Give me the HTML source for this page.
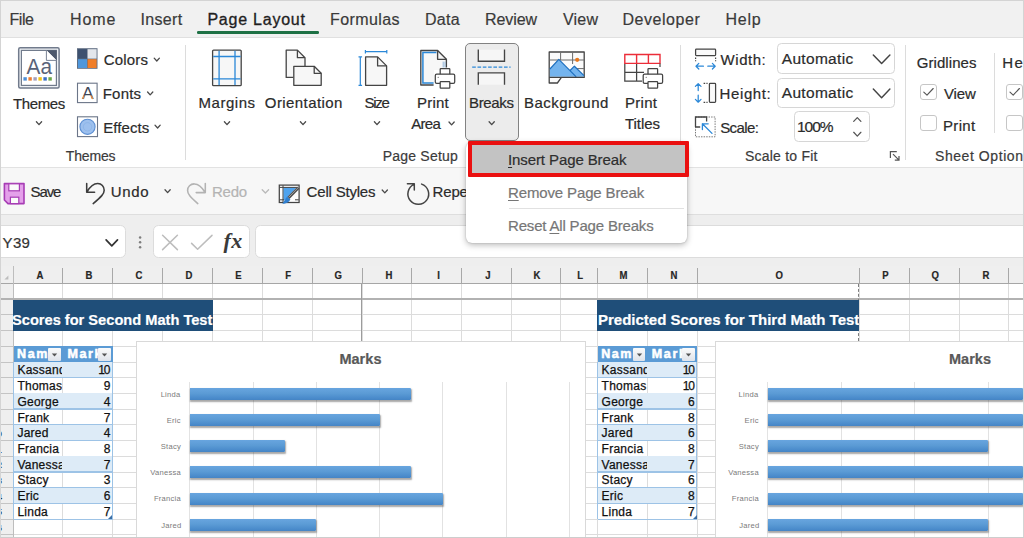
<!DOCTYPE html>
<html lang="en"><head><meta charset="utf-8"><title>Excel - Insert Page Break</title>
<style>
html,body{margin:0;padding:0;background:#fff;}
body{width:1024px;height:538px;overflow:hidden;font-family:"Liberation Sans",sans-serif;}
#app{position:relative;width:1024px;height:538px;overflow:hidden;background:#fff;}
#app div,#app span,#app svg{position:absolute;}
.t{white-space:pre;line-height:20px;-webkit-text-stroke:0.2px;}
.clip{overflow:hidden;}
#frame{left:0;top:0;width:1022px;height:535.5px;border:1px solid #d4d4d4;border-bottom:1.5px solid #cdcdcd;z-index:50;pointer-events:none;}
#tabbar{left:0;top:0;width:1024px;height:37px;background:#f1f1f1;border-bottom:1px solid #e0e0e0;}
#tabsel{left:196.5px;top:31px;width:122px;height:2.6px;background:#1e7145;border-radius:1.3px;}
#ribbon{left:0;top:38px;width:1024px;height:129px;background:#fff;}
#ribline{left:0;top:167px;width:1024px;height:1px;background:#e2e2e2;}
#qat{left:0;top:168px;width:1024px;height:45.5px;background:#f7f7f7;}
#qatline{left:0;top:213.5px;width:1024px;height:1px;background:#dedede;}
#fbar{left:0;top:214.5px;width:1024px;height:51px;background:#eeeeee;}
.fbox{background:#fff;border-radius:5.5px;top:225.3px;height:31.2px;border:1px solid #dcdcdc;box-sizing:content-box;margin-left:-1px;}
.vsep{width:1px;background:#dcdcdc;}
.dd{border:1.2px solid #d6d6d6;border-radius:4.5px;background:#fff;box-sizing:border-box;}
.cb{border:1px solid #c6c6c6;border-radius:3px;background:#fff;box-sizing:border-box;width:16.4px;height:16px;}
#breaksbtn{left:465px;top:43.2px;width:54px;height:98px;box-sizing:border-box;border:1.4px solid #828282;border-radius:5px;background:#ececec;}
#menu{left:466px;top:141.6px;width:220.5px;height:101.4px;background:#fff;border-radius:6px;box-shadow:0 2px 6px rgba(0,0,0,.28),0 0 1.5px rgba(0,0,0,.25);z-index:20;}
#menuhl{left:468px;top:141.3px;width:221.3px;height:35.3px;box-sizing:border-box;border:4.2px solid #ea1010;background:#c3c3c3;z-index:21;border-radius:1px;}
#menusep{left:509px;top:208.3px;width:175px;height:1px;background:#e1e1e1;z-index:22;}
#menutexts{left:0;top:0;z-index:23;}
u{text-decoration:underline;text-underline-offset:2px;text-decoration-thickness:1px;}
/* sheet */
#colhdr{left:0;top:265.5px;width:1024px;height:17.5px;background:#efefef;}
#colhdrline{left:0;top:282.6px;width:1024px;height:1.2px;background:#a6a6a6;}
#rowhdr{left:0;top:284px;width:13px;height:254px;background:#efefef;}
#rowhdrline{left:13px;top:265.5px;width:1px;height:273px;background:#bdbdbd;}
.cs{top:268px;width:1px;height:15px;background:#a8a8a8;}
.gv{width:1px;background:#dcdcdc;top:284px;height:254px;}
.gh{height:1px;background:#dcdcdc;left:0;width:1024px;}
.chart{background:#fff;border:1px solid #d9d9d9;box-sizing:border-box;}
.bar{height:12px;border-radius:0 1px 1px 0;background:linear-gradient(#68a5df 0%,#5b9bd5 45%,#4a8bcb 85%,#4584c4 100%);box-shadow:0.5px 1.6px 1.6px rgba(60,60,60,.45);}
.cg{width:1px;background:#e2e2e2;}

</style></head>
<body>
<div id="app">
<div id="tabbar"></div><div id="tabsel"></div>
<div id="ribbon"></div><div id="ribline"></div>
<div id="qat"></div><div id="qatline"></div>
<div id="fbar"></div>
<div class="fbox" style="left:-6px;width:131px"></div>
<div class="fbox" style="left:153.8px;width:95px"></div>
<div class="fbox" style="left:255.9px;width:800px"></div>
<!-- ribbon separators -->
<div class="vsep" style="left:185px;top:45px;height:115px"></div>
<div class="vsep" style="left:680px;top:45px;height:120px"></div>
<div class="vsep" style="left:905px;top:45px;height:115px"></div>
<div class="vsep" style="left:994px;top:53px;height:80px"></div>
<div id="breaksbtn"></div>
<!-- dropdowns -->
<div class="dd" style="left:777.2px;top:43.1px;width:117.4px;height:30.8px"></div>
<div class="dd" style="left:777.2px;top:77.6px;width:117.4px;height:30.6px"></div>
<div class="dd" style="left:793.6px;top:111.3px;width:76.4px;height:30.4px"></div>
<div class="cb" style="left:920.2px;top:83.8px"></div>
<div class="cb" style="left:920.2px;top:115.3px"></div>
<div class="cb" style="left:1006.4px;top:83.8px"></div>
<div class="cb" style="left:1006.4px;top:115.3px"></div>
<svg id="icons" style="left:0;top:0" width="1024" height="538" viewBox="0 0 1024 538">
<g>
<rect x="18.7" y="47.7" width="40.4" height="40.4" rx="1.5" fill="#eef1f5" stroke="#717b8c" stroke-width="1.5"/>
<rect x="21.4" y="50.4" width="35" height="35" fill="#fff" stroke="#717b8c" stroke-width="1.2"/>
<path d="M46.4 50.2L56.6 50.2L56.6 60.4Z" fill="#4d586c"/>
<path d="M46.4 50.2V60.4H56.6" fill="#fff" stroke="#6b7588" stroke-width="0.9"/>
<rect x="23.4" y="77.2" width="3.4" height="3.4" fill="#4f8fd6"/><rect x="28.4" y="77.2" width="3.4" height="3.4" fill="#ee7d31"/><rect x="33.4" y="77.2" width="3.4" height="3.4" fill="#a5a0bb"/><rect x="38.4" y="77.2" width="3.4" height="3.4" fill="#f2c314"/><rect x="43.4" y="77.2" width="3.4" height="3.4" fill="#3b6fc4"/><rect x="48.4" y="77.2" width="3.4" height="3.4" fill="#6aa84a"/>
</g>
<text x="26.6" y="73.8" font-family="Liberation Sans, sans-serif" font-size="22.5" fill="#596379" textLength="25.4" lengthAdjust="spacingAndGlyphs">Aa</text>
<g><rect x="77" y="48.2" width="20.5" height="20.6" fill="#5f6d82"/>
<rect x="78" y="49.2" width="9" height="9.4" fill="#3d5170"/><rect x="87.6" y="49.2" width="9" height="9.4" fill="#e3e6eb"/>
<rect x="78" y="59.2" width="9" height="8.8" fill="#4f97dc"/><rect x="87.6" y="59.2" width="9" height="8.8" fill="#f07e29"/></g>
<path d="M154.20 58.15L156.80 61.05L159.40 58.15" fill="none" stroke="#4a4a4a" stroke-width="1.3" stroke-linecap="round" stroke-linejoin="round"/>
<rect x="77.5" y="83.2" width="19.6" height="19.4" fill="#fff" stroke="#6b7588" stroke-width="1.1"/>
<text x="82" y="99.4" font-family="Liberation Sans, sans-serif" font-size="16" fill="#3f4656" textLength="11.6" lengthAdjust="spacingAndGlyphs">A</text>
<path d="M82.8 99l1.4-3.6M92.8 99l-1.4-3.6" stroke="#e08a4a" stroke-width="1.3" fill="none"/>
<path d="M147.60 91.95L150.20 94.85L152.80 91.95" fill="none" stroke="#4a4a4a" stroke-width="1.3" stroke-linecap="round" stroke-linejoin="round"/>
<rect x="77.5" y="116.8" width="20" height="19.8" fill="#fff" stroke="#6b7588" stroke-width="1.1"/>
<circle cx="87.5" cy="126.8" r="7.6" fill="#9dc0ee" stroke="#5d8fd2" stroke-width="1.1"/>
<circle cx="87.5" cy="126.8" r="4.2" fill="none" stroke="#8ab2e6" stroke-width="0.8"/>
<path d="M155.00 125.15L157.60 128.05L160.20 125.15" fill="none" stroke="#4a4a4a" stroke-width="1.3" stroke-linecap="round" stroke-linejoin="round"/>
<path d="M36.40 121.75L39.00 124.65L41.60 121.75" fill="none" stroke="#4a4a4a" stroke-width="1.3" stroke-linecap="round" stroke-linejoin="round"/>
<path d="M224.40 121.75L227.00 124.65L229.60 121.75" fill="none" stroke="#4a4a4a" stroke-width="1.3" stroke-linecap="round" stroke-linejoin="round"/>
<path d="M300.40 121.75L303.00 124.65L305.60 121.75" fill="none" stroke="#4a4a4a" stroke-width="1.3" stroke-linecap="round" stroke-linejoin="round"/>
<path d="M374.40 121.75L377.00 124.65L379.60 121.75" fill="none" stroke="#4a4a4a" stroke-width="1.3" stroke-linecap="round" stroke-linejoin="round"/>
<path d="M449.00 121.95L451.60 124.85L454.20 121.95" fill="none" stroke="#4a4a4a" stroke-width="1.3" stroke-linecap="round" stroke-linejoin="round"/>
<path d="M489.10 121.75L491.70 124.65L494.30 121.75" fill="none" stroke="#4a4a4a" stroke-width="1.3" stroke-linecap="round" stroke-linejoin="round"/>
<g fill="none"><rect x="212.6" y="50.1" width="28.6" height="35.6" rx="1" fill="#f7f7f7" stroke="#444" stroke-width="1.3"/>
<path d="M219.1 50.8V85M235 50.8V85M213.2 56.5H240.6M213.2 78.9H240.6" stroke="#2b88d8" stroke-width="1.3"/></g>
<g fill="#f7f7f7" stroke="#444" stroke-width="1.3" stroke-linejoin="round">
<path d="M293.4 77.4H286.2V50.1H297.4L305 57.7V66" fill="#f7f7f7"/>
<path d="M297.4 50.1V57.7H305" fill="none"/>
<path d="M293.8 66.3H314.2L321.2 73.3V85.3H293.8Z"/>
<path d="M314.2 66.3V73.3H321.2" fill="none"/></g>
<g fill="#f7f7f7" stroke="#444" stroke-width="1.3" stroke-linejoin="round">
<path d="M365.6 56.9H377.6L386.6 65.9V85.3H365.6Z"/><path d="M377.6 56.9V65.9H386.6" fill="none"/></g>
<path d="M365.2 51.7H387M365.4 49.9V53.5M386.8 49.9V53.5M360.3 56.6V85.6M358.5 56.8H362.1M358.5 85.4H362.1" stroke="#2b88d8" stroke-width="1.2" fill="none"/>
<path d="M420.8 50.5H437.6L446.4 59.3V70H434V85H420.8Z" fill="#f7f7f7"/>
<g fill="none" stroke="#444" stroke-width="1.35" stroke-linejoin="round">
<path d="M433.6 85H420.8V50.5H437.6L446.4 59.3V67.6"/><path d="M437.6 50.5V59.3H446.4"/></g>
<path d="M436.4 52.5H422.9V83.1H433.6" stroke="#2b88d8" stroke-width="1.5" fill="none"/>
<path d="M443.2 61.6V67.4M445 61.6V67.4" stroke="#7aa8d6" stroke-width="0.8" fill="none"/>
<g fill="#fff" stroke="#444" stroke-width="1.25" stroke-linejoin="round">
<rect x="440.2" y="68.6" width="9.6" height="6.6" rx="0.6"/>
<rect x="435.3" y="74.2" width="19.4" height="9.2" rx="1.4"/>
<rect x="440.2" y="81.6" width="9.6" height="6.4" rx="0.6"/>
<circle cx="438.2" cy="77.2" r="0.55" fill="#444" stroke="none"/></g>
<g fill="#f6f6f6" stroke="#444" stroke-width="1.35" stroke-linejoin="miter">
<path d="M478.3 49.6V61.2H504.5V49.6" /><path d="M478.3 84.8V72.8H504.5V84.8"/></g>
<path d="M472.2 67.2H510.6" stroke="#2b88d8" stroke-width="1.3" stroke-dasharray="3.6 1.7" fill="none"/>
<g>
<path d="M549.2 52H584.2V77.4H561.4L557.4 83H549.2Z" fill="#fbfbfb" stroke="#444" stroke-width="1.3" stroke-linejoin="round"/>
<path d="M560.6 52.4V60M572.6 52.4V64M549.6 60H584M573 68.6H584" stroke="#6a6a6a" stroke-width="1" fill="none"/>
<path d="M549.9 76.8V69L558.8 59.4L576.2 76.8Z" fill="#74b4ee"/>
<path d="M569.6 71L574.4 66.2L584 75.4V76.8H575.4Z" fill="#74b4ee"/>
<path d="M549.9 69L558.8 59.4L576.2 76.8M569.6 71L574.4 66.2L584 75.6" fill="none" stroke="#1d6fbf" stroke-width="1.2" stroke-linejoin="round"/>
<circle cx="577.2" cy="59.8" r="2.1" fill="#e8781e"/>
<path d="M549.2 77.4H584.2" stroke="#444" stroke-width="1.2"/>
</g>
<g fill="none">
<path d="M624.8 63.6V81.2H642M636.6 63.6V81.2M624.8 72.3H644" stroke="#444" stroke-width="1.25"/>
<path d="M624.8 54.5H660V63.4H624.8ZM636.6 54.5V63.4M648.4 54.5V63.4" stroke="#ec2d39" stroke-width="1.4"/>
<path d="M660 63.4V67" stroke="#444" stroke-width="1.2"/></g>
<g fill="#fff" stroke="#444" stroke-width="1.25" stroke-linejoin="round">
<rect x="648" y="68.6" width="9.6" height="6.6" rx="0.6"/>
<rect x="643.2" y="74.2" width="19.4" height="9.2" rx="1.4"/>
<rect x="648" y="81.6" width="9.6" height="6.4" rx="0.6"/>
<circle cx="646.2" cy="77.2" r="0.55" fill="#444" stroke="none"/></g>
<g fill="none"><rect x="695.6" y="49.2" width="20" height="6.4" rx="0.8" fill="#fafafa" stroke="#444" stroke-width="1.25"/>
<path d="M695.6 57.4V61.2M715.6 57.4V61.2" stroke="#444" stroke-width="1.2" stroke-dasharray="1.6 1.2"/>
<path d="M696 66.2H703.4M707.8 66.2H715.2M698.8 63.4L696 66.2L698.8 69M712.4 63.4L715.2 66.2L712.4 69" stroke="#2b88d8" stroke-width="1.25" stroke-linecap="round" stroke-linejoin="round"/></g>
<g fill="none"><rect x="709.4" y="83.4" width="6.2" height="19" rx="0.8" fill="#fafafa" stroke="#444" stroke-width="1.25"/>
<path d="M703.6 83.4H707.6M703.6 102.4H707.6" stroke="#444" stroke-width="1.2" stroke-dasharray="1.6 1.2"/>
<path d="M698.2 83.6V90.6M698.2 95.2V102.2M695.4 86.4L698.2 83.6L701 86.4M695.4 99.4L698.2 102.2L701 99.4" stroke="#2b88d8" stroke-width="1.25" stroke-linecap="round" stroke-linejoin="round"/></g>
<g fill="none"><rect x="695.5" y="117" width="19.6" height="19.8" stroke="#7a7a7a" stroke-width="1" stroke-dasharray="1.5 1.1"/>
<path d="M695.5 127V117H706.6V121.4M695.5 127H700.2" stroke="#444" stroke-width="1.3"/>
<path d="M712 133.4L702.4 123.8M702.4 129.6V123.8H708.2" stroke="#2b88d8" stroke-width="1.3" stroke-linecap="round" stroke-linejoin="round"/></g>
<path d="M873.30 54.90L881.60 63.50L889.90 54.90" fill="none" stroke="#444" stroke-width="1.45" stroke-linecap="round" stroke-linejoin="round"/>
<path d="M873.30 89.10L881.60 97.70L889.90 89.10" fill="none" stroke="#444" stroke-width="1.45" stroke-linecap="round" stroke-linejoin="round"/>
<path d="M853.70 121.40L857.30 117.60L860.90 121.40" fill="none" stroke="#555" stroke-width="1.25" stroke-linecap="round" stroke-linejoin="round"/>
<path d="M853.70 132.30L857.30 136.10L860.90 132.30" fill="none" stroke="#555" stroke-width="1.25" stroke-linecap="round" stroke-linejoin="round"/>
<path d="M923.8 92.10000000000001L927.0 95.10000000000001L933.1999999999999 88.5" fill="none" stroke="#555" stroke-width="1.15" stroke-linecap="round" stroke-linejoin="round"/>
<path d="M1010.0 92.10000000000001L1013.2 95.10000000000001L1019.4 88.5" fill="none" stroke="#555" stroke-width="1.15" stroke-linecap="round" stroke-linejoin="round"/>
<path d="M890.4 158V151.6H896.8M893 154.2L899 160.2M899 156V160.2H894.8" fill="none" stroke="#555" stroke-width="1.2" />
<g><path d="M4.4 183.6H24V203.6H8L4.4 200Z" fill="#e4a0ea" stroke="#a73db5" stroke-width="1.6" stroke-linejoin="round"/>
<rect x="8.8" y="183.8" width="10.6" height="7" fill="#fbfbfb" stroke="#a73db5" stroke-width="1.2"/>
<rect x="10.4" y="197.2" width="8.4" height="6.4" fill="#fbfbfb" stroke="#a73db5" stroke-width="1.2"/></g>
<path d="M86.7 183.4V192.2H94.6M87.2 191.6C90 186.8 93.6 183.6 97.6 183.5C101.6 183.4 104.2 186.6 104.2 190.2C104.2 193.8 101.4 196.6 93.2 203.6" fill="none" stroke="#3d3d3d" stroke-width="1.55" stroke-linecap="round" stroke-linejoin="round"/>
<path d="M165.00 189.75L167.60 192.65L170.20 189.75" fill="none" stroke="#4a4a4a" stroke-width="1.3" stroke-linecap="round" stroke-linejoin="round"/>
<path d="M205.3 183.4V192.6H196.2M204.8 192C202 187.2 198.4 184 194.4 183.9C190.4 183.8 187.6 186.8 187.6 190.4C187.6 194 190 196.8 197.8 203.6" fill="none" stroke="#b3b3b3" stroke-width="1.55" stroke-linecap="round" stroke-linejoin="round"/>
<path d="M262.20 189.80L265.40 193.00L268.60 189.80" fill="none" stroke="#b9b9b9" stroke-width="1.3" stroke-linecap="round" stroke-linejoin="round"/>
<g><rect x="279.3" y="185.1" width="19.8" height="17.4" fill="#fdfdfd" stroke="#444" stroke-width="1.25"/>
<path d="M283.4 187.6H296.6L284.6 200.2H283.4Z" fill="#4fa3ee"/>
<path d="M283 185.4V202.2M279.6 187.4H298.8M279.6 199.8H284M295 199.8H298.8" stroke="#444" stroke-width="1" fill="none"/>
<path d="M298.4 187.8L288.4 198" stroke="#505050" stroke-width="3" stroke-linecap="butt"/>
<path d="M298.6 187.2L288.6 197.4" stroke="#b5b5b5" stroke-width="0.8"/>
<path d="M287.2 196.4L290.4 199.6C288.8 203 285.2 204.2 282.2 203.4C284 202 284.8 199.2 287.2 196.4Z" fill="#2f7fd0"/></g>
<path d="M382.20 189.95L384.80 192.85L387.40 189.95" fill="none" stroke="#4a4a4a" stroke-width="1.3" stroke-linecap="round" stroke-linejoin="round"/>
<path d="M414.2 184.4A10.4 10.4 0 1 0 421.6 184.1M407.4 183.7H414.3V190" fill="none" stroke="#444" stroke-width="1.5" stroke-linecap="round" stroke-linejoin="round"/>
<path d="M106.10 239.80L111.80 245.80L117.50 239.80" fill="none" stroke="#333" stroke-width="1.7" stroke-linecap="round" stroke-linejoin="round"/>
<circle cx="140.1" cy="237.4" r="1.25" fill="#7d7d7d"/>
<circle cx="140.1" cy="242.3" r="1.25" fill="#7d7d7d"/>
<circle cx="140.1" cy="247.2" r="1.25" fill="#7d7d7d"/>
<path d="M162.6 235.2L177.4 249.6M177.4 235.2L162.6 249.6" stroke="#bdbdbd" stroke-width="1.55" fill="none" stroke-linecap="round"/>
<path d="M191.6 243.4L197.6 249.2L212 235.4" stroke="#bdbdbd" stroke-width="1.55" fill="none" stroke-linecap="round" stroke-linejoin="round"/>
</svg>
<div id="colhdr"></div><div id="rowhdr"></div>
<div class="gh" style="top:298.62px"></div>
<div class="gh" style="top:314.34px"></div>
<div class="gh" style="top:330.06px"></div>
<div class="gh" style="top:345.78px"></div>
<div class="gh" style="top:361.50px"></div>
<div class="gh" style="top:377.22px"></div>
<div class="gh" style="top:392.94px"></div>
<div class="gh" style="top:408.66px"></div>
<div class="gh" style="top:424.38px"></div>
<div class="gh" style="top:440.10px"></div>
<div class="gh" style="top:455.82px"></div>
<div class="gh" style="top:471.54px"></div>
<div class="gh" style="top:487.26px"></div>
<div class="gh" style="top:502.98px"></div>
<div class="gh" style="top:518.70px"></div>
<div class="gh" style="top:534.42px"></div>
<div class="gv" style="left:62.30px"></div>
<div class="cs" style="left:62.30px"></div>
<div class="gv" style="left:112.10px"></div>
<div class="cs" style="left:112.10px"></div>
<div class="gv" style="left:161.90px"></div>
<div class="cs" style="left:161.90px"></div>
<div class="gv" style="left:211.90px"></div>
<div class="cs" style="left:211.90px"></div>
<div class="gv" style="left:261.50px"></div>
<div class="cs" style="left:261.50px"></div>
<div class="gv" style="left:311.50px"></div>
<div class="cs" style="left:311.50px"></div>
<div class="gv" style="left:361.50px"></div>
<div class="cs" style="left:361.50px"></div>
<div class="gv" style="left:411.30px"></div>
<div class="cs" style="left:411.30px"></div>
<div class="gv" style="left:461.00px"></div>
<div class="cs" style="left:461.00px"></div>
<div class="gv" style="left:510.50px"></div>
<div class="cs" style="left:510.50px"></div>
<div class="gv" style="left:559.50px"></div>
<div class="cs" style="left:559.50px"></div>
<div class="gv" style="left:596.70px"></div>
<div class="cs" style="left:596.70px"></div>
<div class="gv" style="left:646.70px"></div>
<div class="cs" style="left:646.70px"></div>
<div class="gv" style="left:696.50px"></div>
<div class="cs" style="left:696.50px"></div>
<div class="gv" style="left:858.50px"></div>
<div class="cs" style="left:858.50px"></div>
<div class="gv" style="left:908.70px"></div>
<div class="cs" style="left:908.70px"></div>
<div class="gv" style="left:958.50px"></div>
<div class="cs" style="left:958.50px"></div>
<div class="gv" style="left:1008.20px"></div>
<div class="cs" style="left:1008.20px"></div>
<div class="gv" style="left:1057.50px"></div>
<div class="cs" style="left:1057.50px"></div>
<div class="cs" style="left:12.5px"></div>
<div id="colhdrline"></div><div id="rowhdrline"></div>
<div style="left:0;top:298.62px;width:13px;height:1px;background:#c4c4c4"></div>
<div style="left:0;top:314.34px;width:13px;height:1px;background:#c4c4c4"></div>
<div style="left:0;top:330.06px;width:13px;height:1px;background:#c4c4c4"></div>
<div style="left:0;top:345.78px;width:13px;height:1px;background:#c4c4c4"></div>
<div style="left:0;top:361.50px;width:13px;height:1px;background:#c4c4c4"></div>
<div style="left:0;top:377.22px;width:13px;height:1px;background:#c4c4c4"></div>
<div style="left:0;top:392.94px;width:13px;height:1px;background:#c4c4c4"></div>
<div style="left:0;top:408.66px;width:13px;height:1px;background:#c4c4c4"></div>
<div style="left:0;top:424.38px;width:13px;height:1px;background:#c4c4c4"></div>
<div style="left:0;top:440.10px;width:13px;height:1px;background:#c4c4c4"></div>
<div style="left:0;top:455.82px;width:13px;height:1px;background:#c4c4c4"></div>
<div style="left:0;top:471.54px;width:13px;height:1px;background:#c4c4c4"></div>
<div style="left:0;top:487.26px;width:13px;height:1px;background:#c4c4c4"></div>
<div style="left:0;top:502.98px;width:13px;height:1px;background:#c4c4c4"></div>
<div style="left:0;top:518.70px;width:13px;height:1px;background:#c4c4c4"></div>
<div style="left:0;top:534.42px;width:13px;height:1px;background:#c4c4c4"></div>
<svg style="left:4.2px;top:274.8px" width="5" height="5" viewBox="0 0 5 5"><path d="M4.4 0.4V4.4H0.4Z" fill="#bdbdbd"/></svg>
<div style="left:0;top:298.42px;width:1024px;height:1.2px;background:#b2b2b2"></div>
<div style="left:361.2px;top:284px;width:1.2px;height:57px;background:#9c9c9c"></div>
<div style="left:858.4px;top:284px;width:0;height:57px;border-left:1.4px dashed #7d7d7d"></div>
<div style="left:13px;top:299.52px;width:199.6px;height:31.24px;background:#1f4e79"></div>
<div style="left:597.4px;top:299.52px;width:261.2px;height:31.24px;background:#1f4e79"></div>
<div style="left:13.6px;top:346.48px;width:99.00px;height:15.52px;background:#5b9bd5"></div>
<div style="left:48.40px;top:348.08px;width:12.6px;height:13.32px;background:linear-gradient(#fbfbfb,#dfe3ea);border-radius:1px"></div>
<svg style="left:51.20px;top:352.68px" width="7" height="4" viewBox="0 0 7 4"><path d="M0.8 0.4H6.2L3.5 3.6Z" fill="#555"/></svg>
<div style="left:98.00px;top:348.08px;width:12.6px;height:13.32px;background:linear-gradient(#fbfbfb,#dfe3ea);border-radius:1px"></div>
<svg style="left:100.80px;top:352.68px" width="7" height="4" viewBox="0 0 7 4"><path d="M0.8 0.4H6.2L3.5 3.6Z" fill="#555"/></svg>
<div style="left:13.6px;top:362.00px;width:99.00px;height:15.72px;background:#ddebf7"></div>
<div style="left:13.6px;top:377.02px;width:99.00px;height:1.2px;background:#9dc3e6"></div>
<div style="left:13.6px;top:392.74px;width:99.00px;height:1.2px;background:#9dc3e6"></div>
<div style="left:13.6px;top:393.44px;width:99.00px;height:15.72px;background:#ddebf7"></div>
<div style="left:13.6px;top:408.46px;width:99.00px;height:1.2px;background:#9dc3e6"></div>
<div style="left:13.6px;top:424.18px;width:99.00px;height:1.2px;background:#9dc3e6"></div>
<div style="left:13.6px;top:424.88px;width:99.00px;height:15.72px;background:#ddebf7"></div>
<div style="left:13.6px;top:439.90px;width:99.00px;height:1.2px;background:#9dc3e6"></div>
<div style="left:13.6px;top:455.62px;width:99.00px;height:1.2px;background:#9dc3e6"></div>
<div style="left:13.6px;top:456.32px;width:99.00px;height:15.72px;background:#ddebf7"></div>
<div style="left:13.6px;top:471.34px;width:99.00px;height:1.2px;background:#9dc3e6"></div>
<div style="left:13.6px;top:487.06px;width:99.00px;height:1.2px;background:#9dc3e6"></div>
<div style="left:13.6px;top:487.76px;width:99.00px;height:15.72px;background:#ddebf7"></div>
<div style="left:13.6px;top:502.78px;width:99.00px;height:1.2px;background:#9dc3e6"></div>
<div style="left:13.6px;top:518.50px;width:99.00px;height:1.2px;background:#9dc3e6"></div>
<div style="left:13.2px;top:362.00px;width:1px;height:157.20px;background:#9dc3e6"></div>
<div style="left:112.00px;top:362.00px;width:1px;height:157.20px;background:#9dc3e6"></div>
<svg style="left:108.40px;top:514.60px" width="4" height="4" viewBox="0 0 4 4"><path d="M4 0V4H0Z" fill="#3a6ea5"/></svg>
<div style="left:597.8000000000001px;top:346.48px;width:99.20px;height:15.52px;background:#5b9bd5"></div>
<div style="left:632.80px;top:348.08px;width:12.6px;height:13.32px;background:linear-gradient(#fbfbfb,#dfe3ea);border-radius:1px"></div>
<svg style="left:635.60px;top:352.68px" width="7" height="4" viewBox="0 0 7 4"><path d="M0.8 0.4H6.2L3.5 3.6Z" fill="#555"/></svg>
<div style="left:682.40px;top:348.08px;width:12.6px;height:13.32px;background:linear-gradient(#fbfbfb,#dfe3ea);border-radius:1px"></div>
<svg style="left:685.20px;top:352.68px" width="7" height="4" viewBox="0 0 7 4"><path d="M0.8 0.4H6.2L3.5 3.6Z" fill="#555"/></svg>
<div style="left:597.8000000000001px;top:362.00px;width:99.20px;height:15.72px;background:#ddebf7"></div>
<div style="left:597.8000000000001px;top:377.02px;width:99.20px;height:1.2px;background:#9dc3e6"></div>
<div style="left:597.8000000000001px;top:392.74px;width:99.20px;height:1.2px;background:#9dc3e6"></div>
<div style="left:597.8000000000001px;top:393.44px;width:99.20px;height:15.72px;background:#ddebf7"></div>
<div style="left:597.8000000000001px;top:408.46px;width:99.20px;height:1.2px;background:#9dc3e6"></div>
<div style="left:597.8000000000001px;top:424.18px;width:99.20px;height:1.2px;background:#9dc3e6"></div>
<div style="left:597.8000000000001px;top:424.88px;width:99.20px;height:15.72px;background:#ddebf7"></div>
<div style="left:597.8000000000001px;top:439.90px;width:99.20px;height:1.2px;background:#9dc3e6"></div>
<div style="left:597.8000000000001px;top:455.62px;width:99.20px;height:1.2px;background:#9dc3e6"></div>
<div style="left:597.8000000000001px;top:456.32px;width:99.20px;height:15.72px;background:#ddebf7"></div>
<div style="left:597.8000000000001px;top:471.34px;width:99.20px;height:1.2px;background:#9dc3e6"></div>
<div style="left:597.8000000000001px;top:487.06px;width:99.20px;height:1.2px;background:#9dc3e6"></div>
<div style="left:597.8000000000001px;top:487.76px;width:99.20px;height:15.72px;background:#ddebf7"></div>
<div style="left:597.8000000000001px;top:502.78px;width:99.20px;height:1.2px;background:#9dc3e6"></div>
<div style="left:597.8000000000001px;top:518.50px;width:99.20px;height:1.2px;background:#9dc3e6"></div>
<div style="left:597.4000000000001px;top:362.00px;width:1px;height:157.20px;background:#9dc3e6"></div>
<div style="left:696.40px;top:362.00px;width:1px;height:157.20px;background:#9dc3e6"></div>
<svg style="left:692.80px;top:514.60px" width="4" height="4" viewBox="0 0 4 4"><path d="M4 0V4H0Z" fill="#3a6ea5"/></svg>
<div class="chart" style="left:136.3px;top:340.5px;width:449.49999999999994px;height:210px"></div>
<div class="cg" style="left:252.50px;top:381.5px;height:160px"></div>
<div class="cg" style="left:315.70px;top:381.5px;height:160px"></div>
<div class="cg" style="left:378.90px;top:381.5px;height:160px"></div>
<div class="cg" style="left:442.10px;top:381.5px;height:160px"></div>
<div class="cg" style="left:505.50px;top:381.5px;height:160px"></div>
<div class="cg" style="left:568.70px;top:381.5px;height:160px"></div>
<div class="cg" style="left:189.00px;top:381.5px;height:160px;background:#e3e3e3"></div>
<div class="bar" style="left:189.8px;top:387.70px;width:221.34px"></div>
<div class="bar" style="left:189.8px;top:413.90px;width:189.72px"></div>
<div class="bar" style="left:189.8px;top:440.10px;width:94.86px"></div>
<div class="bar" style="left:189.8px;top:466.30px;width:221.34px"></div>
<div class="bar" style="left:189.8px;top:492.50px;width:252.96px"></div>
<div class="bar" style="left:189.8px;top:518.70px;width:126.48px"></div>
<div class="chart" style="left:714.8px;top:340.5px;width:325.20000000000005px;height:210px"></div>
<div class="cg" style="left:840.50px;top:381.5px;height:160px"></div>
<div class="cg" style="left:914.00px;top:381.5px;height:160px"></div>
<div class="cg" style="left:987.70px;top:381.5px;height:160px"></div>
<div class="cg" style="left:766.90px;top:381.5px;height:160px;background:#e3e3e3"></div>
<div class="bar" style="left:767.7px;top:387.70px;width:255.50px"></div>
<div class="bar" style="left:767.7px;top:413.90px;width:255.50px"></div>
<div class="bar" style="left:767.7px;top:440.10px;width:220.50px"></div>
<div class="bar" style="left:767.7px;top:466.30px;width:255.50px"></div>
<div class="bar" style="left:767.7px;top:492.50px;width:255.50px"></div>
<div class="bar" style="left:767.7px;top:518.70px;width:220.50px"></div>
<span class="t" style="left:35.57px;top:264.80px;font-size:10.6px;color:#262626;font-weight:700;transform:scaleX(0.9);">A</span>
<span class="t" style="left:85.37px;top:264.80px;font-size:10.6px;color:#262626;font-weight:700;transform:scaleX(0.9);">B</span>
<span class="t" style="left:135.17px;top:264.80px;font-size:10.6px;color:#262626;font-weight:700;transform:scaleX(0.9);">C</span>
<span class="t" style="left:185.07px;top:264.80px;font-size:10.6px;color:#262626;font-weight:700;transform:scaleX(0.9);">D</span>
<span class="t" style="left:235.16px;top:264.80px;font-size:10.6px;color:#262626;font-weight:700;transform:scaleX(0.9);">E</span>
<span class="t" style="left:285.26px;top:264.80px;font-size:10.6px;color:#262626;font-weight:700;transform:scaleX(0.9);">F</span>
<span class="t" style="left:334.38px;top:264.80px;font-size:10.6px;color:#262626;font-weight:700;transform:scaleX(0.9);">G</span>
<span class="t" style="left:384.57px;top:264.80px;font-size:10.6px;color:#262626;font-weight:700;transform:scaleX(0.9);">H</span>
<span class="t" style="left:436.67px;top:264.80px;font-size:10.6px;color:#262626;font-weight:700;transform:scaleX(0.9);">I</span>
<span class="t" style="left:484.80px;top:264.80px;font-size:10.6px;color:#262626;font-weight:700;transform:scaleX(0.9);">J</span>
<span class="t" style="left:533.17px;top:264.80px;font-size:10.6px;color:#262626;font-weight:700;transform:scaleX(0.9);">K</span>
<span class="t" style="left:576.86px;top:264.80px;font-size:10.6px;color:#262626;font-weight:700;transform:scaleX(0.9);">L</span>
<span class="t" style="left:619.29px;top:264.80px;font-size:10.6px;color:#262626;font-weight:700;transform:scaleX(0.9);">M</span>
<span class="t" style="left:669.77px;top:264.80px;font-size:10.6px;color:#262626;font-weight:700;transform:scaleX(0.9);">N</span>
<span class="t" style="left:775.38px;top:264.80px;font-size:10.6px;color:#262626;font-weight:700;transform:scaleX(0.9);">O</span>
<span class="t" style="left:882.06px;top:264.80px;font-size:10.6px;color:#262626;font-weight:700;transform:scaleX(0.9);">P</span>
<span class="t" style="left:931.48px;top:264.80px;font-size:10.6px;color:#262626;font-weight:700;transform:scaleX(0.9);">Q</span>
<span class="t" style="left:981.52px;top:264.80px;font-size:10.6px;color:#262626;font-weight:700;transform:scaleX(0.9);">R</span>
<div class="clip" style="left:0px;top:283.4px;width:13px;height:15.720000000000027px"><span class="t" style="left:-6.07px;top:-1.00px;font-size:9.6px;color:#262626;font-weight:700;">1</span></div>
<div class="clip" style="left:0px;top:299.12px;width:13px;height:15.71999999999997px"><span class="t" style="left:-6.07px;top:-1.00px;font-size:9.6px;color:#262626;font-weight:700;">2</span></div>
<div class="clip" style="left:0px;top:314.84px;width:13px;height:15.720000000000027px"><span class="t" style="left:-6.07px;top:-1.00px;font-size:9.6px;color:#262626;font-weight:700;">3</span></div>
<div class="clip" style="left:0px;top:330.56px;width:13px;height:15.71999999999997px"><span class="t" style="left:-6.07px;top:-1.00px;font-size:9.6px;color:#262626;font-weight:700;">4</span></div>
<div class="clip" style="left:0px;top:346.28px;width:13px;height:15.720000000000027px"><span class="t" style="left:-6.07px;top:-1.00px;font-size:9.6px;color:#262626;font-weight:700;">5</span></div>
<div class="clip" style="left:0px;top:362.0px;width:13px;height:15.71999999999997px"><span class="t" style="left:-6.07px;top:-1.00px;font-size:9.6px;color:#262626;font-weight:700;">6</span></div>
<div class="clip" style="left:0px;top:377.71999999999997px;width:13px;height:15.720000000000027px"><span class="t" style="left:-6.07px;top:-1.00px;font-size:9.6px;color:#262626;font-weight:700;">7</span></div>
<div class="clip" style="left:0px;top:393.44px;width:13px;height:15.71999999999997px"><span class="t" style="left:-6.07px;top:-1.00px;font-size:9.6px;color:#262626;font-weight:700;">8</span></div>
<div class="clip" style="left:0px;top:409.15999999999997px;width:13px;height:15.720000000000027px"><span class="t" style="left:-6.07px;top:-1.00px;font-size:9.6px;color:#262626;font-weight:700;">9</span></div>
<div class="clip" style="left:0px;top:424.88px;width:13px;height:15.720000000000027px"><span class="t" style="left:-8.74px;top:-1.00px;font-size:9.6px;color:#262626;font-weight:700;">10</span></div>
<div class="clip" style="left:0px;top:440.6px;width:13px;height:15.71999999999997px"><span class="t" style="left:-8.48px;top:-1.00px;font-size:9.6px;color:#262626;font-weight:700;">11</span></div>
<div class="clip" style="left:0px;top:456.32px;width:13px;height:15.71999999999997px"><span class="t" style="left:-8.74px;top:-1.00px;font-size:9.6px;color:#262626;font-weight:700;">12</span></div>
<div class="clip" style="left:0px;top:472.03999999999996px;width:13px;height:15.720000000000027px"><span class="t" style="left:-8.74px;top:-1.00px;font-size:9.6px;color:#262626;font-weight:700;">13</span></div>
<div class="clip" style="left:0px;top:487.76px;width:13px;height:15.720000000000027px"><span class="t" style="left:-8.74px;top:-1.00px;font-size:9.6px;color:#262626;font-weight:700;">14</span></div>
<div class="clip" style="left:0px;top:503.48px;width:13px;height:15.720000000000027px"><span class="t" style="left:-8.74px;top:-1.00px;font-size:9.6px;color:#262626;font-weight:700;">15</span></div>
<div class="clip" style="left:0px;top:519.2px;width:13px;height:15.719999999999914px"><span class="t" style="left:-8.74px;top:-1.00px;font-size:9.6px;color:#262626;font-weight:700;">16</span></div>
<div class="clip" style="left:0px;top:534.92px;width:13px;height:15.720000000000027px"><span class="t" style="left:-8.74px;top:-1.00px;font-size:9.6px;color:#262626;font-weight:700;">17</span></div>
<div class="clip" style="left:13px;top:299.12px;width:199.6px;height:32.44px"><span class="t" style="left:-0.80px;top:11.28px;font-size:15.5px;color:#fff;font-weight:700;transform:scaleX(0.9431);transform-origin:0 0;">Scores for Second Math Test</span></div>
<div class="clip" style="left:597.4px;top:299.12px;width:261.4px;height:32.44px"><span class="t" style="left:0.23px;top:11.28px;font-size:15.5px;color:#fff;font-weight:700;transform:scaleX(0.9673);transform-origin:0 0;">Predicted Scores for Third Math Test</span></div>
<div class="clip" style="left:13px;top:346.47999999999996px;width:35.4px;height:15.520000000000039px"><span class="t" style="left:4.10px;top:-2.68px;font-size:12.5px;color:#fff;font-weight:700;letter-spacing:1.535px;-webkit-text-stroke:0.55px #fff;">Name</span></div>
<div class="clip" style="left:62.8px;top:346.47999999999996px;width:35.2px;height:15.520000000000039px"><span class="t" style="left:4.60px;top:-2.68px;font-size:12.5px;color:#fff;font-weight:700;letter-spacing:1.655px;-webkit-text-stroke:0.55px #fff;">Marks</span></div>
<div class="clip" style="left:13px;top:362.0px;width:49.4px;height:15.71999999999997px"><span class="t" style="left:4.40px;top:-1.58px;font-size:12px;color:#111;-webkit-text-stroke:0.25px #111;letter-spacing:0.25px;">Kassandra</span></div>
<span class="t" style="left:98.23px;top:360.42px;font-size:12px;color:#111;-webkit-text-stroke:0.25px #111;letter-spacing:-1.1px;">10</span>
<div class="clip" style="left:13px;top:377.71999999999997px;width:49.4px;height:15.720000000000027px"><span class="t" style="left:4.40px;top:-1.58px;font-size:12px;color:#111;-webkit-text-stroke:0.25px #111;letter-spacing:0.25px;">Thomas</span></div>
<span class="t" style="left:103.70px;top:376.14px;font-size:12px;color:#111;-webkit-text-stroke:0.25px #111;letter-spacing:-1.1px;">9</span>
<div class="clip" style="left:13px;top:393.44px;width:49.4px;height:15.71999999999997px"><span class="t" style="left:4.40px;top:-1.58px;font-size:12px;color:#111;-webkit-text-stroke:0.25px #111;letter-spacing:0.25px;">George</span></div>
<span class="t" style="left:103.70px;top:391.86px;font-size:12px;color:#111;-webkit-text-stroke:0.25px #111;letter-spacing:-1.1px;">4</span>
<div class="clip" style="left:13px;top:409.15999999999997px;width:49.4px;height:15.720000000000027px"><span class="t" style="left:4.40px;top:-1.58px;font-size:12px;color:#111;-webkit-text-stroke:0.25px #111;letter-spacing:0.25px;">Frank</span></div>
<span class="t" style="left:103.70px;top:407.58px;font-size:12px;color:#111;-webkit-text-stroke:0.25px #111;letter-spacing:-1.1px;">7</span>
<div class="clip" style="left:13px;top:424.88px;width:49.4px;height:15.720000000000027px"><span class="t" style="left:4.40px;top:-1.58px;font-size:12px;color:#111;-webkit-text-stroke:0.25px #111;letter-spacing:0.25px;">Jared</span></div>
<span class="t" style="left:103.70px;top:423.30px;font-size:12px;color:#111;-webkit-text-stroke:0.25px #111;letter-spacing:-1.1px;">4</span>
<div class="clip" style="left:13px;top:440.6px;width:49.4px;height:15.71999999999997px"><span class="t" style="left:4.40px;top:-1.58px;font-size:12px;color:#111;-webkit-text-stroke:0.25px #111;letter-spacing:0.25px;">Francia</span></div>
<span class="t" style="left:103.70px;top:439.02px;font-size:12px;color:#111;-webkit-text-stroke:0.25px #111;letter-spacing:-1.1px;">8</span>
<div class="clip" style="left:13px;top:456.32px;width:49.4px;height:15.71999999999997px"><span class="t" style="left:4.40px;top:-1.58px;font-size:12px;color:#111;-webkit-text-stroke:0.25px #111;letter-spacing:0.25px;">Vanessa</span></div>
<span class="t" style="left:103.70px;top:454.74px;font-size:12px;color:#111;-webkit-text-stroke:0.25px #111;letter-spacing:-1.1px;">7</span>
<div class="clip" style="left:13px;top:472.03999999999996px;width:49.4px;height:15.720000000000027px"><span class="t" style="left:4.40px;top:-1.58px;font-size:12px;color:#111;-webkit-text-stroke:0.25px #111;letter-spacing:0.25px;">Stacy</span></div>
<span class="t" style="left:103.70px;top:470.46px;font-size:12px;color:#111;-webkit-text-stroke:0.25px #111;letter-spacing:-1.1px;">3</span>
<div class="clip" style="left:13px;top:487.76px;width:49.4px;height:15.720000000000027px"><span class="t" style="left:4.40px;top:-1.58px;font-size:12px;color:#111;-webkit-text-stroke:0.25px #111;letter-spacing:0.25px;">Eric</span></div>
<span class="t" style="left:103.70px;top:486.18px;font-size:12px;color:#111;-webkit-text-stroke:0.25px #111;letter-spacing:-1.1px;">6</span>
<div class="clip" style="left:13px;top:503.48px;width:49.4px;height:15.720000000000027px"><span class="t" style="left:4.40px;top:-1.58px;font-size:12px;color:#111;-webkit-text-stroke:0.25px #111;letter-spacing:0.25px;">Linda</span></div>
<span class="t" style="left:103.70px;top:501.90px;font-size:12px;color:#111;-webkit-text-stroke:0.25px #111;letter-spacing:-1.1px;">7</span>
<div class="clip" style="left:597.2px;top:346.47999999999996px;width:35.60000000000002px;height:15.520000000000039px"><span class="t" style="left:4.10px;top:-2.68px;font-size:12.5px;color:#fff;font-weight:700;letter-spacing:1.535px;-webkit-text-stroke:0.55px #fff;">Name</span></div>
<div class="clip" style="left:647.2px;top:346.47999999999996px;width:35.19999999999993px;height:15.520000000000039px"><span class="t" style="left:4.60px;top:-2.68px;font-size:12.5px;color:#fff;font-weight:700;letter-spacing:1.655px;-webkit-text-stroke:0.55px #fff;">Marks</span></div>
<div class="clip" style="left:597.2px;top:362.0px;width:49.60000000000002px;height:15.71999999999997px"><span class="t" style="left:4.40px;top:-1.58px;font-size:12px;color:#111;-webkit-text-stroke:0.25px #111;letter-spacing:0.25px;">Kassandra</span></div>
<span class="t" style="left:682.63px;top:360.42px;font-size:12px;color:#111;-webkit-text-stroke:0.25px #111;letter-spacing:-1.1px;">10</span>
<div class="clip" style="left:597.2px;top:377.71999999999997px;width:49.60000000000002px;height:15.720000000000027px"><span class="t" style="left:4.40px;top:-1.58px;font-size:12px;color:#111;-webkit-text-stroke:0.25px #111;letter-spacing:0.25px;">Thomas</span></div>
<span class="t" style="left:682.63px;top:376.14px;font-size:12px;color:#111;-webkit-text-stroke:0.25px #111;letter-spacing:-1.1px;">10</span>
<div class="clip" style="left:597.2px;top:393.44px;width:49.60000000000002px;height:15.71999999999997px"><span class="t" style="left:4.40px;top:-1.58px;font-size:12px;color:#111;-webkit-text-stroke:0.25px #111;letter-spacing:0.25px;">George</span></div>
<span class="t" style="left:688.10px;top:391.86px;font-size:12px;color:#111;-webkit-text-stroke:0.25px #111;letter-spacing:-1.1px;">6</span>
<div class="clip" style="left:597.2px;top:409.15999999999997px;width:49.60000000000002px;height:15.720000000000027px"><span class="t" style="left:4.40px;top:-1.58px;font-size:12px;color:#111;-webkit-text-stroke:0.25px #111;letter-spacing:0.25px;">Frank</span></div>
<span class="t" style="left:688.10px;top:407.58px;font-size:12px;color:#111;-webkit-text-stroke:0.25px #111;letter-spacing:-1.1px;">8</span>
<div class="clip" style="left:597.2px;top:424.88px;width:49.60000000000002px;height:15.720000000000027px"><span class="t" style="left:4.40px;top:-1.58px;font-size:12px;color:#111;-webkit-text-stroke:0.25px #111;letter-spacing:0.25px;">Jared</span></div>
<span class="t" style="left:688.10px;top:423.30px;font-size:12px;color:#111;-webkit-text-stroke:0.25px #111;letter-spacing:-1.1px;">6</span>
<div class="clip" style="left:597.2px;top:440.6px;width:49.60000000000002px;height:15.71999999999997px"><span class="t" style="left:4.40px;top:-1.58px;font-size:12px;color:#111;-webkit-text-stroke:0.25px #111;letter-spacing:0.25px;">Francia</span></div>
<span class="t" style="left:688.10px;top:439.02px;font-size:12px;color:#111;-webkit-text-stroke:0.25px #111;letter-spacing:-1.1px;">8</span>
<div class="clip" style="left:597.2px;top:456.32px;width:49.60000000000002px;height:15.71999999999997px"><span class="t" style="left:4.40px;top:-1.58px;font-size:12px;color:#111;-webkit-text-stroke:0.25px #111;letter-spacing:0.25px;">Vanessa</span></div>
<span class="t" style="left:688.10px;top:454.74px;font-size:12px;color:#111;-webkit-text-stroke:0.25px #111;letter-spacing:-1.1px;">7</span>
<div class="clip" style="left:597.2px;top:472.03999999999996px;width:49.60000000000002px;height:15.720000000000027px"><span class="t" style="left:4.40px;top:-1.58px;font-size:12px;color:#111;-webkit-text-stroke:0.25px #111;letter-spacing:0.25px;">Stacy</span></div>
<span class="t" style="left:688.10px;top:470.46px;font-size:12px;color:#111;-webkit-text-stroke:0.25px #111;letter-spacing:-1.1px;">6</span>
<div class="clip" style="left:597.2px;top:487.76px;width:49.60000000000002px;height:15.720000000000027px"><span class="t" style="left:4.40px;top:-1.58px;font-size:12px;color:#111;-webkit-text-stroke:0.25px #111;letter-spacing:0.25px;">Eric</span></div>
<span class="t" style="left:688.10px;top:486.18px;font-size:12px;color:#111;-webkit-text-stroke:0.25px #111;letter-spacing:-1.1px;">8</span>
<div class="clip" style="left:597.2px;top:503.48px;width:49.60000000000002px;height:15.720000000000027px"><span class="t" style="left:4.40px;top:-1.58px;font-size:12px;color:#111;-webkit-text-stroke:0.25px #111;letter-spacing:0.25px;">Linda</span></div>
<span class="t" style="left:688.10px;top:501.90px;font-size:12px;color:#111;-webkit-text-stroke:0.25px #111;letter-spacing:-1.1px;">7</span>
<span class="t" style="left:339.40px;top:348.90px;font-size:14.5px;color:#595959;font-weight:700;letter-spacing:0.038px;">Marks</span>
<span class="t" style="left:160.64px;top:384.60px;font-size:7.6px;color:#7a7a7a;letter-spacing:0.25px;-webkit-text-stroke:0;">Linda</span>
<span class="t" style="left:166.72px;top:410.80px;font-size:7.6px;color:#7a7a7a;letter-spacing:0.25px;-webkit-text-stroke:0;">Eric</span>
<span class="t" style="left:160.81px;top:437.00px;font-size:7.6px;color:#7a7a7a;letter-spacing:0.25px;-webkit-text-stroke:0;">Stacy</span>
<span class="t" style="left:150.24px;top:463.20px;font-size:7.6px;color:#7a7a7a;letter-spacing:0.25px;-webkit-text-stroke:0;">Vanessa</span>
<span class="t" style="left:153.90px;top:489.40px;font-size:7.6px;color:#7a7a7a;letter-spacing:0.25px;-webkit-text-stroke:0;">Francia</span>
<span class="t" style="left:161.23px;top:515.60px;font-size:7.6px;color:#7a7a7a;letter-spacing:0.25px;-webkit-text-stroke:0;">Jared</span>
<span class="t" style="left:949.00px;top:348.90px;font-size:14.5px;color:#595959;font-weight:700;letter-spacing:0.013px;">Marks</span>
<span class="t" style="left:738.54px;top:384.60px;font-size:7.6px;color:#7a7a7a;letter-spacing:0.25px;-webkit-text-stroke:0;">Linda</span>
<span class="t" style="left:744.62px;top:410.80px;font-size:7.6px;color:#7a7a7a;letter-spacing:0.25px;-webkit-text-stroke:0;">Eric</span>
<span class="t" style="left:738.71px;top:437.00px;font-size:7.6px;color:#7a7a7a;letter-spacing:0.25px;-webkit-text-stroke:0;">Stacy</span>
<span class="t" style="left:728.14px;top:463.20px;font-size:7.6px;color:#7a7a7a;letter-spacing:0.25px;-webkit-text-stroke:0;">Vanessa</span>
<span class="t" style="left:731.80px;top:489.40px;font-size:7.6px;color:#7a7a7a;letter-spacing:0.25px;-webkit-text-stroke:0;">Francia</span>
<span class="t" style="left:739.13px;top:515.60px;font-size:7.6px;color:#7a7a7a;letter-spacing:0.25px;-webkit-text-stroke:0;">Jared</span>
<span class="t" style="left:9.50px;top:9.60px;font-size:16px;color:#3a3a3a;letter-spacing:-0.461px;">File</span>
<span class="t" style="left:70.00px;top:9.60px;font-size:16px;color:#3a3a3a;letter-spacing:0.940px;">Home</span>
<span class="t" style="left:140.50px;top:9.60px;font-size:16px;color:#3a3a3a;letter-spacing:0.326px;">Insert</span>
<span class="t" style="left:330.00px;top:9.60px;font-size:16px;color:#3a3a3a;letter-spacing:0.417px;">Formulas</span>
<span class="t" style="left:424.90px;top:9.60px;font-size:16px;color:#3a3a3a;letter-spacing:0.334px;">Data</span>
<span class="t" style="left:485.00px;top:9.60px;font-size:16px;color:#3a3a3a;letter-spacing:-0.061px;">Review</span>
<span class="t" style="left:563.00px;top:9.60px;font-size:16px;color:#3a3a3a;letter-spacing:0.188px;">View</span>
<span class="t" style="left:622.40px;top:9.60px;font-size:16px;color:#3a3a3a;letter-spacing:0.562px;">Developer</span>
<span class="t" style="left:725.40px;top:9.60px;font-size:16px;color:#3a3a3a;letter-spacing:0.797px;">Help</span>
<span class="t" style="left:207.40px;top:9.60px;font-size:16px;color:#1f1f1f;letter-spacing:0.769px;-webkit-text-stroke:0.32px #1f1f1f;">Page Layout</span>
<span class="t" style="left:13.00px;top:93.50px;font-size:15px;color:#2b2b2b;letter-spacing:-0.377px;">Themes</span>
<span class="t" style="left:103.70px;top:49.80px;font-size:15px;color:#2b2b2b;letter-spacing:0.171px;">Colors</span>
<span class="t" style="left:102.70px;top:83.70px;font-size:15px;color:#2b2b2b;letter-spacing:0.221px;">Fonts</span>
<span class="t" style="left:103.20px;top:118.40px;font-size:15px;color:#2b2b2b;letter-spacing:0.070px;">Effects</span>
<span class="t" style="left:198.60px;top:93.40px;font-size:15px;color:#2b2b2b;letter-spacing:0.508px;">Margins</span>
<span class="t" style="left:264.80px;top:93.40px;font-size:15px;color:#2b2b2b;letter-spacing:0.417px;">Orientation</span>
<span class="t" style="left:364.50px;top:93.40px;font-size:15px;color:#2b2b2b;letter-spacing:-1.246px;">Size</span>
<span class="t" style="left:417.00px;top:93.40px;font-size:15px;color:#2b2b2b;letter-spacing:0.206px;">Print</span>
<span class="t" style="left:411.30px;top:113.60px;font-size:15px;color:#2b2b2b;letter-spacing:-0.714px;">Area</span>
<span class="t" style="left:469.00px;top:93.40px;font-size:15px;color:#2b2b2b;letter-spacing:-0.337px;">Breaks</span>
<span class="t" style="left:524.00px;top:93.40px;font-size:15px;color:#2b2b2b;letter-spacing:0.477px;">Background</span>
<span class="t" style="left:624.90px;top:93.40px;font-size:15px;color:#2b2b2b;letter-spacing:0.306px;">Print</span>
<span class="t" style="left:625.00px;top:113.60px;font-size:15px;color:#2b2b2b;letter-spacing:-0.056px;">Titles</span>
<span class="t" style="left:720.60px;top:49.80px;font-size:15px;color:#2b2b2b;letter-spacing:0.532px;">Width:</span>
<span class="t" style="left:719.60px;top:83.70px;font-size:15px;color:#2b2b2b;letter-spacing:0.607px;">Height:</span>
<span class="t" style="left:720.20px;top:118.00px;font-size:15px;color:#2b2b2b;letter-spacing:-0.604px;">Scale:</span>
<span class="t" style="left:781.80px;top:48.80px;font-size:15.5px;color:#2b2b2b;letter-spacing:0.304px;">Automatic</span>
<span class="t" style="left:781.80px;top:82.80px;font-size:15.5px;color:#2b2b2b;letter-spacing:0.304px;">Automatic</span>
<span class="t" style="left:797.00px;top:116.60px;font-size:15.5px;color:#2b2b2b;letter-spacing:-1.020px;">100%</span>
<span class="t" style="left:916.70px;top:52.80px;font-size:15px;color:#2b2b2b;letter-spacing:0.077px;">Gridlines</span>
<span class="t" style="left:943.90px;top:84.20px;font-size:15px;color:#2b2b2b;letter-spacing:-0.103px;">View</span>
<span class="t" style="left:943.00px;top:115.60px;font-size:15px;color:#2b2b2b;letter-spacing:0.331px;">Print</span>
<span class="t" style="left:1002.20px;top:52.80px;font-size:15px;color:#2b2b2b;letter-spacing:1.561px;">Headings</span>
<span class="t" style="left:65.80px;top:146.00px;font-size:14px;color:#3b3b3b;letter-spacing:-0.174px;">Themes</span>
<span class="t" style="left:382.70px;top:146.00px;font-size:14px;color:#3b3b3b;letter-spacing:0.213px;">Page Setup</span>
<span class="t" style="left:745.00px;top:146.00px;font-size:14px;color:#3b3b3b;letter-spacing:0.215px;">Scale to Fit</span>
<span class="t" style="left:935.00px;top:146.00px;font-size:14px;color:#3b3b3b;letter-spacing:0.565px;">Sheet Options</span>
<span class="t" style="left:30.60px;top:182.20px;font-size:15px;color:#2b2b2b;letter-spacing:-1.149px;">Save</span>
<span class="t" style="left:110.80px;top:182.20px;font-size:15px;color:#2b2b2b;letter-spacing:0.628px;">Undo</span>
<span class="t" style="left:212.00px;top:182.20px;font-size:15px;color:#b4b4b4;letter-spacing:-0.272px;">Redo</span>
<span class="t" style="left:306.60px;top:182.20px;font-size:15px;color:#2b2b2b;letter-spacing:-0.195px;">Cell Styles</span>
<span class="t" style="left:432.50px;top:182.20px;font-size:15px;color:#2b2b2b;letter-spacing:-0.140px;">Repeat</span>
<span class="t" style="left:2.50px;top:233.20px;font-size:15px;color:#333;letter-spacing:0.376px;">Y39</span>
<span class="t fx" style="left:223.60px;top:231.40px;font-size:22px;color:#3a3a3a;font-weight:700;font-family:'Liberation Serif', serif;font-style:italic;-webkit-text-stroke:0;letter-spacing:0.4px;">fx</span>
<div id="menu"></div><div id="menuhl"></div><div id="menusep"></div>
<div id="menutexts"><span class="t" style="left:508.00px;top:150.20px;font-size:15px;color:#2e2e2e;letter-spacing:-0.098px;"><u>I</u>nsert Page Break</span>
<span class="t" style="left:508.00px;top:182.90px;font-size:15px;color:#767676;letter-spacing:-0.138px;"><u>R</u>emove Page Break</span>
<span class="t" style="left:508.00px;top:215.50px;font-size:15px;color:#767676;letter-spacing:-0.179px;">Reset <u>A</u>ll Page Breaks</span></div>

<div id="frame"></div>
</div>
</body></html>
